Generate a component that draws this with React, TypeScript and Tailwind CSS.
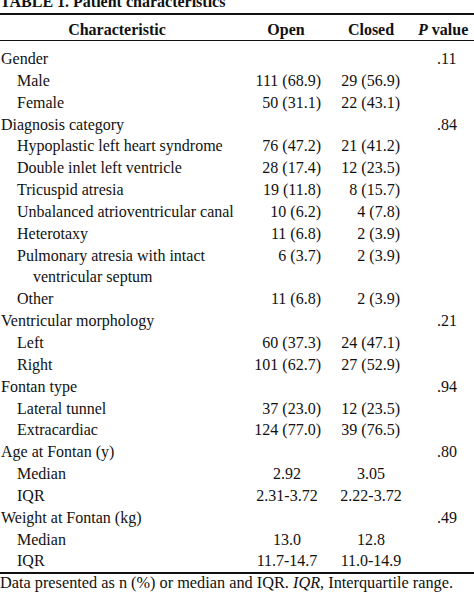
type Row = {
  label: string;
  level: 0 | 1 | 2;
  open?: string;
  closed?: string;
  p?: string;
  centered?: boolean;
};

const rows: Row[] = [
  { label: "Gender", level: 0, p: ".11" },
  { label: "Male", level: 1, open: "111 (68.9)", closed: "29 (56.9)" },
  { label: "Female", level: 1, open: "50 (31.1)", closed: "22 (43.1)" },
  { label: "Diagnosis category", level: 0, p: ".84" },
  { label: "Hypoplastic left heart syndrome", level: 1, open: "76 (47.2)", closed: "21 (41.2)" },
  { label: "Double inlet left ventricle", level: 1, open: "28 (17.4)", closed: "12 (23.5)" },
  { label: "Tricuspid atresia", level: 1, open: "19 (11.8)", closed: "8 (15.7)" },
  { label: "Unbalanced atrioventricular canal", level: 1, open: "10 (6.2)", closed: "4 (7.8)" },
  { label: "Heterotaxy", level: 1, open: "11 (6.8)", closed: "2 (3.9)" },
  { label: "Pulmonary atresia with intact", level: 1, open: "6 (3.7)", closed: "2 (3.9)" },
  { label: "ventricular septum", level: 2 },
  { label: "Other", level: 1, open: "11 (6.8)", closed: "2 (3.9)" },
  { label: "Ventricular morphology", level: 0, p: ".21" },
  { label: "Left", level: 1, open: "60 (37.3)", closed: "24 (47.1)" },
  { label: "Right", level: 1, open: "101 (62.7)", closed: "27 (52.9)" },
  { label: "Fontan type", level: 0, p: ".94" },
  { label: "Lateral tunnel", level: 1, open: "37 (23.0)", closed: "12 (23.5)" },
  { label: "Extracardiac", level: 1, open: "124 (77.0)", closed: "39 (76.5)" },
  { label: "Age at Fontan (y)", level: 0, p: ".80" },
  { label: "Median", level: 1, open: "2.92", closed: "3.05", centered: true },
  { label: "IQR", level: 1, open: "2.31-3.72", closed: "2.22-3.72", centered: true },
  { label: "Weight at Fontan (kg)", level: 0, p: ".49" },
  { label: "Median", level: 1, open: "13.0", closed: "12.8", centered: true },
  { label: "IQR", level: 1, open: "11.7-14.7", closed: "11.0-14.9", centered: true },
];

const indent = ["pl-[1px]", "pl-[17px]", "pl-[33px]"];

export default function App() {
  return (
    <div
      className="w-[474px] h-[592px] overflow-hidden bg-white text-[#111] text-[16px]"
      style={{ fontFamily: '"Liberation Serif", "Times New Roman", serif' }}
    >
      {/* Title, cut off at the top as in the scan */}
      <div className="mt-[-6px] h-[16px] leading-[16px] font-bold whitespace-nowrap mb-[3px]">
        TABLE 1. Patient characteristics
      </div>

      <div className="border-t-2 border-[#111]" />

      {/* Header */}
      <div className="flex pt-[3px] h-[26px] leading-[23px] font-bold border-b border-[#111]">
        <div className="w-[234px] text-center">Characteristic</div>
        <div className="w-[100px] text-center pl-[4px]">Open</div>
        <div className="w-[74px] text-center">Closed</div>
        <div className="flex-1 pl-[10px] whitespace-nowrap">
          <span className="italic">P</span> value
        </div>
      </div>

      {/* Body */}
      <div className="pt-[7px]">
        {rows.map((row, i) => (
          <div key={i} className="flex h-[21.85px] leading-[21.85px] whitespace-nowrap">
            <div className={`w-[240px] ${indent[row.level]}`}>{row.label}</div>
            <div
              className={`w-[94px] ${row.centered ? "text-center" : "text-right pr-[13px]"}`}
            >
              {row.open}
            </div>
            <div
              className={`w-[74px] ${row.centered ? "text-center" : "text-right pr-[8px]"}`}
            >
              {row.closed}
            </div>
            <div className="flex-1 pl-[29px]">{row.p}</div>
          </div>
        ))}
      </div>

      <div className="border-t-2 border-[#111]" />

      {/* Footnote */}
      <div className="leading-[15px] pt-[1px] text-[16.3px] whitespace-nowrap">
        Data presented as n (%) or median and IQR. <span className="italic">IQR</span>,
        Interquartile range.
      </div>
    </div>
  );
}
